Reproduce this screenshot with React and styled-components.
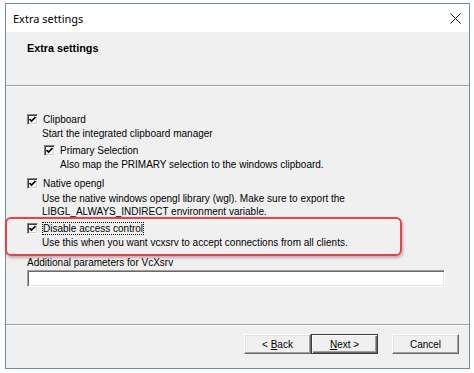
import React from "react";
import styled, { createGlobalStyle } from "styled-components";

const Global = createGlobalStyle`
  html, body { margin: 0; padding: 0; background: #ffffff; }
  body { font-family: "Liberation Sans", Arial, sans-serif; }
`;

const Page = styled.div`
  width: 474px;
  height: 373px;
  padding: 3px 0 0 5px;
  box-sizing: border-box;
`;

const Window = styled.div`
  position: relative;
  width: 465px;
  height: 366px;
  box-sizing: border-box;
  border: 1px solid #6f8ea3;
  background: #f0f0f0;
  display: flex;
  flex-direction: column;
`;

const TitleBar = styled.div`
  height: 28px;
  flex: none;
  background: #ffffff;
  display: flex;
  align-items: center;
  justify-content: space-between;
  padding: 0 8px 0 7px;
`;

const TitleText = styled.span`
  font-family: "Noto Sans", "Open Sans", sans-serif;
  font-size: 11px;
  color: #000;
`;

const Header = styled.div`
  height: 54px;
  flex: none;
  box-sizing: border-box;
  padding: 9px 0 0 21px;
  border-bottom: 1px solid #a0a0a0;
  box-shadow: 0 1px 0 #ffffff;
`;

const HeaderTitle = styled.div`
  font-size: 10.8px;
  font-weight: bold;
  color: #000;
  line-height: 14px;
`;

const Content = styled.div`
  flex: 1;
  box-sizing: border-box;
  padding: 27px 0 0 21px;
  border-bottom: 1px solid #a0a0a0;
  box-shadow: 0 1px 0 #ffffff;
  font-size: 10px;
  color: #000;
`;

const Row = styled.div`
  display: flex;
  align-items: center;
  height: 13px;
  margin-top: ${(p) => p.$mt || 0}px;
  margin-left: ${(p) => p.$indent || 0}px;
`;

const Box = styled.span`
  width: 11px;
  height: 11px;
  box-sizing: border-box;
  background: #fff;
  border-top: 1px solid #808080;
  border-left: 1px solid #808080;
  border-right: 1px solid #ffffff;
  border-bottom: 1px solid #ffffff;
  box-shadow: inset 1px 1px 0 #404040, inset -1px -1px 0 #d4d0c8;
  display: flex;
  align-items: center;
  justify-content: center;
  flex: none;
`;

const Label = styled.span`
  margin-left: 4px;
  line-height: 13px;
  padding: 0 1px;
  outline: ${(p) => (p.$focus ? "1px dotted #000" : "none")};
  outline-offset: -1px;
`;

const Desc = styled.div`
  line-height: 13px;
  margin-top: ${(p) => p.$mt || 0}px;
  margin-left: ${(p) => p.$indent || 0}px;
`;

const FieldLabel = styled.div`
  line-height: 13px;
  margin-top: 7px;
`;

const Input = styled.div`
  margin-top: 1px;
  width: 418px;
  height: 17px;
  box-sizing: border-box;
  background: #fff;
  border-top: 1px solid #a0a0a0;
  border-left: 1px solid #a0a0a0;
  border-right: 1px solid #ffffff;
  border-bottom: 1px solid #ffffff;
  box-shadow: inset 1px 1px 0 #696969, inset -1px -1px 0 #e3e3e3;
`;

const Footer = styled.div`
  height: 43px;
  flex: none;
  box-sizing: border-box;
  display: flex;
  align-items: flex-start;
  justify-content: flex-end;
  padding: 9px 10px 0 0;
`;

const Button = styled.button`
  width: 67px;
  height: 20px;
  box-sizing: border-box;
  margin-left: ${(p) => p.$ml || 0}px;
  background: #f0f0f0;
  font-family: "Liberation Sans", Arial, sans-serif;
  font-size: 10px;
  color: #000;
  padding: 0;
  border-style: solid;
  border-width: 1px;
  border-color: ${(p) =>
    p.$default ? "#3c3c3c" : "#ffffff #696969 #696969 #ffffff"};
  box-shadow: ${(p) =>
    p.$default
      ? "inset 1px 1px 0 #ffffff, inset -1px -1px 0 #696969, inset -2px -2px 0 #a0a0a0"
      : "inset -1px -1px 0 #a0a0a0, inset 1px 1px 0 #e3e3e3"};
`;

const U = styled.span`
  text-decoration: underline;
`;

const Highlight = styled.div`
  position: absolute;
  left: -1px;
  top: 213px;
  width: 397px;
  height: 39px;
  box-sizing: border-box;
  border: 2px solid #e2434d;
  border-radius: 6px;
  box-shadow: 1px 2px 3px rgba(120, 40, 40, 0.35);
  pointer-events: none;
`;

const Check = () => (
  <svg width="7" height="7" viewBox="0 0 7 7">
    <path d="M0.5 3 L2.5 5 L6.5 1" fill="none" stroke="#000" strokeWidth="1.6" />
  </svg>
);

const Close = () => (
  <svg width="11" height="11" viewBox="0 0 11 11">
    <path d="M0.5 0.5 L10.5 10.5 M10.5 0.5 L0.5 10.5" stroke="#111" strokeWidth="1" />
  </svg>
);

const Option = ({ label, indent, mt, focus }) => (
  <Row $indent={indent} $mt={mt}>
    <Box>
      <Check />
    </Box>
    <Label $focus={focus}>{label}</Label>
  </Row>
);

export default function App() {
  return (
    <>
      <Global />
      <Page>
        <Window>
          <TitleBar>
            <TitleText>Extra settings</TitleText>
            <Close />
          </TitleBar>
          <Header>
            <HeaderTitle>Extra settings</HeaderTitle>
          </Header>
          <Content>
            <Option label="Clipboard" />
            <Desc $indent={15} $mt={1}>Start the integrated clipboard manager</Desc>
            <Option label="Primary Selection" indent={17} mt={4} />
            <Desc $indent={33} $mt={1}>
              Also map the PRIMARY selection to the windows clipboard.
            </Desc>
            <Option label="Native opengl" mt={6} />
            <Desc $indent={15} $mt={2}>
              Use the native windows opengl library (wgl). Make sure to export the
              <br />
              LIBGL_ALWAYS_INDIRECT environment variable.
            </Desc>
            <Option label="Disable access control" mt={4} focus />
            <Desc $indent={15} $mt={1}>
              Use this when you want vcxsrv to accept connections from all clients.
            </Desc>
            <FieldLabel>Additional parameters for VcXsrv</FieldLabel>
            <Input />
          </Content>
          <Footer>
            <Button>
              &lt; <U>B</U>ack
            </Button>
            <Button $default>
              <U>N</U>ext &gt;
            </Button>
            <Button $ml={14}>Cancel</Button>
          </Footer>
          <Highlight />
        </Window>
      </Page>
    </>
  );
}
